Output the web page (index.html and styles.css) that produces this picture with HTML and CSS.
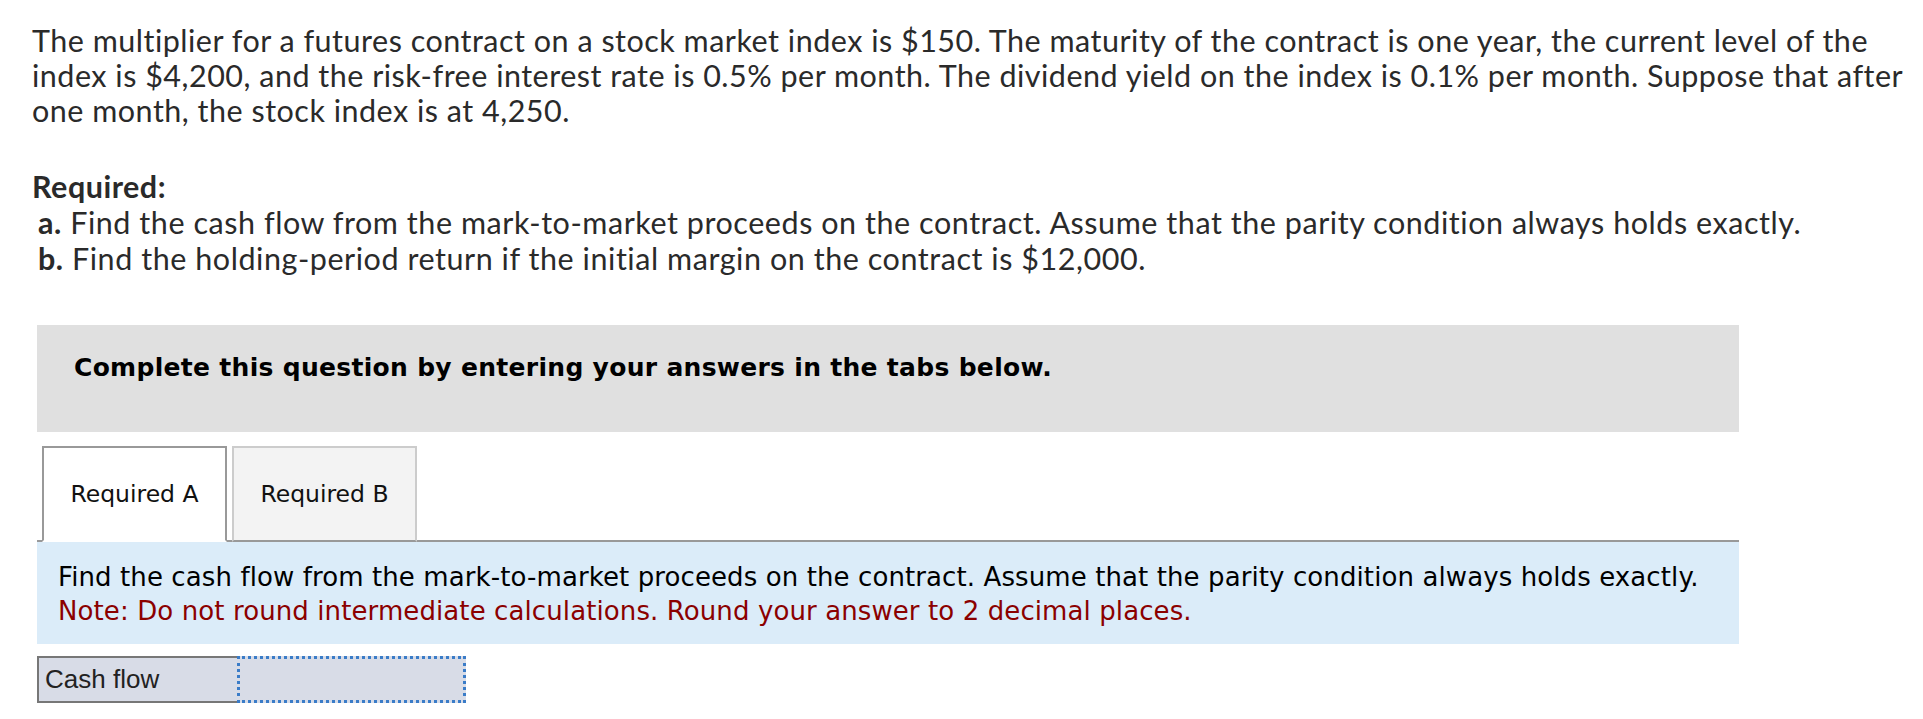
FILE: index.html
```html
<!DOCTYPE html>
<html>
<head>
<meta charset="utf-8">
<link rel="stylesheet" href="styles.css">
</head>
<body>
<div class="page">
  <div class="question">
    <p class="intro">The multiplier for a futures contract on a stock market index is $150. The maturity of the contract is one year, the current level of the index is $4,200, and the risk-free interest rate is 0.5% per month. The dividend yield on the index is 0.1% per month. Suppose that after one month, the stock index is at 4,250.</p>
    <p class="req-title">Required:</p>
    <p class="req-item"><b>a.</b> Find the cash flow from the mark-to-market proceeds on the contract. Assume that the parity condition always holds exactly.</p>
    <p class="req-item"><b>b.</b> Find the holding-period return if the initial margin on the contract is $12,000.</p>
  </div>
  <div class="instructions">Complete this question by entering your answers in the tabs below.</div>
  <div class="tabs">
    <div class="tab active">Required A</div>
    <div class="tab">Required B</div>
  </div>
  <div class="panel">
    <div class="panel-text">Find the cash flow from the mark-to-market proceeds on the contract. Assume that the parity condition always holds exactly.</div>
    <div class="panel-note">Note: Do not round intermediate calculations. Round your answer to 2 decimal places.</div>
  </div>
  <div class="answer">
    <div class="answer-label">Cash flow</div>
    <div class="answer-input"></div>
  </div>
</div>
</body>
</html>
```

FILE: styles.css
```css
html, body {
  margin: 0;
  padding: 0;
  background: #ffffff;
}

.page {
  padding: 23px 0 0 32px;
  width: 1885px;
}

.question {
  font-family: Lato, "Open Sans", sans-serif;
  font-size: 30.5px;
  letter-spacing: 0.5px;
  line-height: 35px;
  color: #2a2a2a;
}

.question p {
  margin: 0;
}

.intro {
  margin-bottom: 40px !important;
}

.req-title {
  font-weight: 700;
  line-height: 36px;
}

.req-item {
  padding-left: 6px;
  line-height: 36px;
  letter-spacing: 0.55px;
}

.req-item b {
  font-weight: 700;
}

.instructions {
  box-sizing: border-box;
  margin: 49px 0 0 5px;
  width: 1702px;
  height: 107px;
  padding: 28px 37px 0;
  background: #e0e0e0;
  font-family: "DejaVu Sans", Verdana, sans-serif;
  font-weight: 700;
  font-size: 25px;
  letter-spacing: 0.3px;
  line-height: 30px;
  color: #000;
}

.tabs {
  display: flex;
  gap: 5px;
  margin: 14px 0 0 5px;
  width: 1702px;
  padding-left: 5px;
  box-sizing: border-box;
  border-bottom: 2px solid #999999;
}

.tab {
  box-sizing: border-box;
  width: 185px;
  height: 96px;
  margin-bottom: -2px;
  display: flex;
  align-items: center;
  justify-content: center;
  font-family: "DejaVu Sans", Verdana, sans-serif;
  font-size: 23.5px;
  color: #111;
  background: #f3f3f3;
  border: 2px solid #cccccc;
  border-bottom: 2px solid #999999;
}

.tab.active {
  background: #ffffff;
  border-color: #999999;
  border-bottom-color: #ffffff;
}

.panel {
  box-sizing: border-box;
  margin-left: 5px;
  width: 1702px;
  height: 102px;
  padding: 18px 21px 0;
  background: #dbecf9;
  font-family: "DejaVu Sans", Verdana, sans-serif;
  font-size: 26px;
  letter-spacing: 0.1px;
  line-height: 34px;
  color: #000;
}

.panel-note {
  color: #8b0000;
}

.answer {
  display: flex;
  margin: 12px 0 0 5px;
  height: 47px;
}

.answer-label {
  box-sizing: border-box;
  width: 200px;
  height: 47px;
  padding-left: 6px;
  display: flex;
  align-items: center;
  background: #d8dce7;
  border: 2px solid #777777;
  border-right: none;
  font-family: "Liberation Sans", Arial, sans-serif;
  font-size: 26px;
  color: #222;
}

.answer-input {
  box-sizing: border-box;
  width: 229px;
  height: 47px;
  background: #d8dce7;
  border: 3px dotted #3a7cc8;
}
```
